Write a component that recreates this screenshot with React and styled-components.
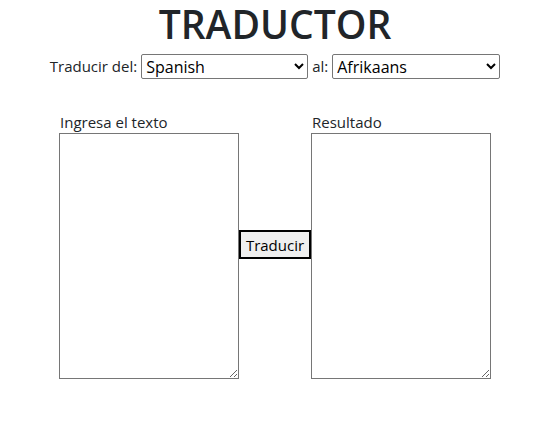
import React, { useState } from "react";
import styled, { createGlobalStyle } from "styled-components";

const GlobalStyle = createGlobalStyle`
  body {
    margin: 0;
    font-family: "Open Sans", "Noto Sans", sans-serif;
    font-size: 15px;
    color: #212529;
    background: #fff;
  }
`;

const Page = styled.div`
  display: flex;
  flex-direction: column;
  align-items: center;
  padding-left: 4px;
`;

const Title = styled.h1`
  margin: 0;
  font-size: 39px;
  font-weight: 600;
  line-height: 1.25;
`;

const LangRow = styled.div`
  display: flex;
  align-items: center;
  gap: 4px;
  margin-top: 5px;
`;

const Select = styled.select`
  width: ${(p) => p.width}px;
  height: 25px;
  font-family: inherit;
  font-size: 16px;
  color: #000;
  border: 1px solid #767676;
  border-radius: 2px;
  background: #fff;
`;

const Panels = styled.div`
  display: flex;
  align-items: center;
  margin-top: 32px;
`;

const Column = styled.div`
  display: flex;
  flex-direction: column;
`;

const Label = styled.label`
  padding-left: 1px;
  line-height: 22px;
`;

const TextArea = styled.textarea`
  width: 180px;
  height: 246px;
  box-sizing: border-box;
  border: 1px solid #767676;
  font-family: inherit;
  font-size: 15px;
  margin: 0;
`;

const TranslateButton = styled.button`
  width: 72px;
  height: 29px;
  box-sizing: border-box;
  border: 2px solid #000;
  background: #efefef;
  font-family: inherit;
  font-size: 15px;
  color: #000;
  padding: 0;
`;

const languages = ["Spanish", "Afrikaans", "English", "French", "German"];

export default function App() {
  const [from, setFrom] = useState("Spanish");
  const [to, setTo] = useState("Afrikaans");

  return (
    <>
      <GlobalStyle />
      <Page>
        <Title>TRADUCTOR</Title>
        <LangRow>
          <span>Traducir del:</span>
          <Select width={167} value={from} onChange={(e) => setFrom(e.target.value)}>
            {languages.map((l) => (
              <option key={l}>{l}</option>
            ))}
          </Select>
          <span>al:</span>
          <Select width={168} value={to} onChange={(e) => setTo(e.target.value)}>
            {languages.map((l) => (
              <option key={l}>{l}</option>
            ))}
          </Select>
        </LangRow>
        <Panels>
          <Column>
            <Label>Ingresa el texto</Label>
            <TextArea />
          </Column>
          <TranslateButton>Traducir</TranslateButton>
          <Column>
            <Label>Resultado</Label>
            <TextArea readOnly />
          </Column>
        </Panels>
      </Page>
    </>
  );
}
